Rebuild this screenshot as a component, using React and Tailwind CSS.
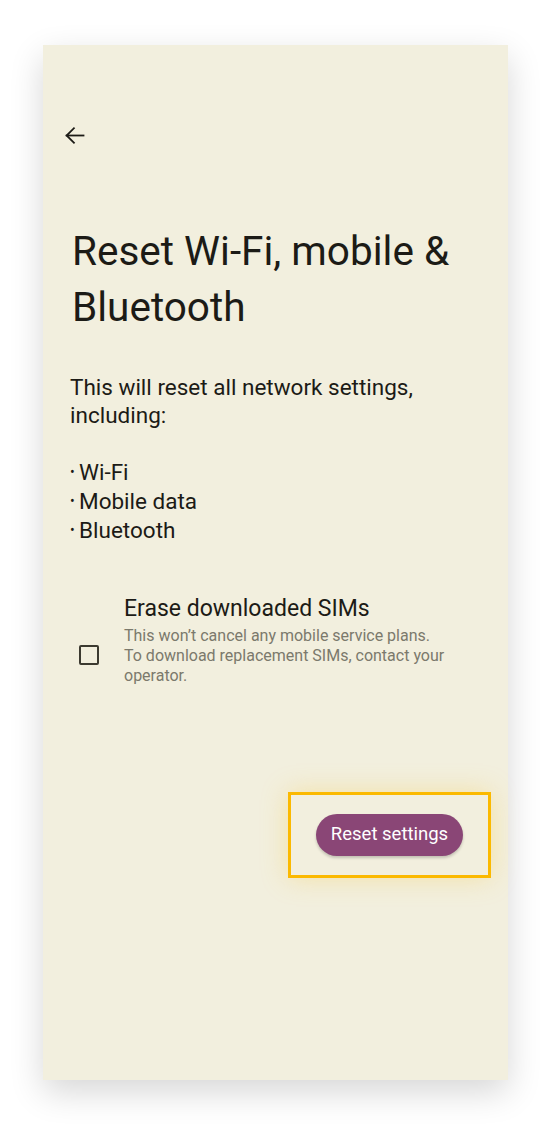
import React, { useState } from 'react';

function BackArrow() {
  return (
    <svg width="27" height="27" viewBox="0 0 24 24" fill="none" stroke="#1c1b16" strokeWidth="1.6" strokeLinecap="square">
      <path d="M20 12H5" />
      <path d="M11.5 5.5L5 12l6.5 6.5" />
    </svg>
  );
}

export default function App() {
  const [erase, setErase] = useState(false);

  return (
    <div className="min-h-[1126px] bg-white pt-[45px] pl-[43px]" style={{ fontFamily: 'Roboto, "Open Sans", sans-serif' }}>
      {/* Phone screen */}
      <div className="w-[465px] h-[1035px] bg-[#f2efde] shadow-[0_12px_32px_rgba(0,0,0,0.16)] flex flex-col">
        <div className="pl-[18px] pt-[77px]">
          <button className="block"><BackArrow /></button>
        </div>

        <h1 className="mt-[74px] px-[29px] text-[40.5px] leading-[56px] text-[#1c1b16] font-normal">
          Reset Wi-Fi, mobile &amp; Bluetooth
        </h1>

        <p className="mt-[38px] px-[27px] text-[22.5px] leading-[28px] text-[#1c1b16]">
          This will reset all network settings, including:
        </p>

        <ul className="mt-[29px] px-[27px] text-[22.5px] leading-[29px] text-[#1c1b16]">
          <li className="flex items-center"><span className="w-[9px] text-[14px]">•</span>Wi-Fi</li>
          <li className="flex items-center"><span className="w-[9px] text-[14px]">•</span>Mobile data</li>
          <li className="flex items-center"><span className="w-[9px] text-[14px]">•</span>Bluetooth</li>
        </ul>

        <div className="mt-[49px] flex items-start pl-[36px] pr-[30px]">
          <button
            onClick={() => setErase(!erase)}
            className="mt-[51px] w-[20px] h-[20px] shrink-0 rounded-[2px] border-2 border-[#3c3a30]"
          />
          <div className="ml-[25px] w-[323px]">
            <div className="text-[23px] leading-[30px] text-[#1c1b16]">Erase downloaded SIMs</div>
            <div className="mt-[2px] text-[16px] leading-[20px] text-[#7b796c]">
              This won’t cancel any mobile service plans. To download replacement SIMs, contact your operator.
            </div>
          </div>
        </div>

        <div className="mt-[106px] flex justify-end pr-[17px]">
          <div className="w-[203px] h-[86px] border-[3px] border-[#fbb900] shadow-[0_0_24px_rgba(245,200,60,0.35)] flex items-center justify-center">
            <button className="h-[42px] px-[15px] rounded-full bg-[#8a4676] text-white text-[18.5px] shadow-[0_2px_3px_rgba(0,0,0,0.2)]">
              Reset settings
            </button>
          </div>
        </div>
      </div>
    </div>
  );
}
